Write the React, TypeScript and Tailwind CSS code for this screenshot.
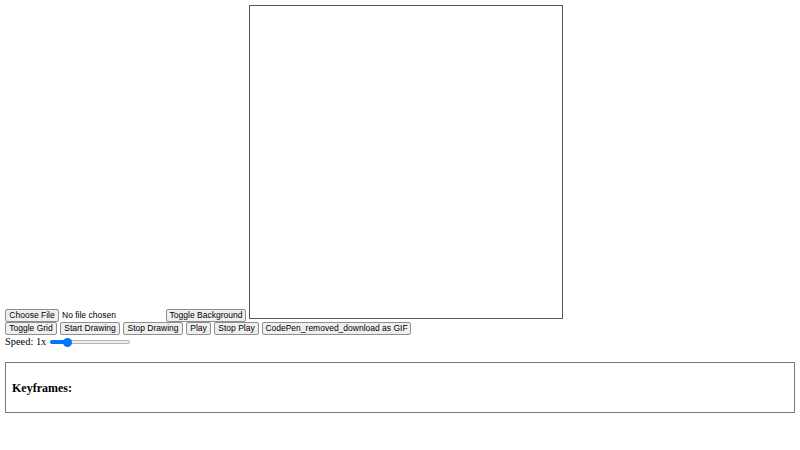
const btn =
  "h-[13px] px-0 flex items-center justify-center bg-[#efefef] border border-[#8f8f8f] rounded-[2px] text-[8.5px] leading-none text-black font-['Liberation_Sans',Arial,sans-serif] whitespace-nowrap shrink-0";

export default function App() {
  return (
    <div className="p-[5px] bg-white text-black font-['Liberation_Serif','Times_New_Roman',serif]">
      {/* top row: file input, background toggle, canvas */}
      <div className="flex items-end">
        <div className="flex items-center w-[158px] shrink-0">
          <button className={`${btn} w-[54px]`}>Choose File</button>
          <span className="ml-[3px] text-[8.5px] leading-none font-['Liberation_Sans',Arial,sans-serif]">
            No file chosen
          </span>
        </div>
        <button className={`${btn} ml-[3px] w-[80px]`}>Toggle Background</button>
        <div className="ml-[3px] mb-[3px] w-[314px] h-[314px] border border-[#555] bg-white shrink-0" />
      </div>

      {/* controls */}
      <div className="flex items-center gap-[3px]">
        <button className={`${btn} w-[52px]`}>Toggle Grid</button>
        <button className={`${btn} w-[60px]`}>Start Drawing</button>
        <button className={`${btn} w-[60px]`}>Stop Drawing</button>
        <button className={`${btn} w-[25px]`}>Play</button>
        <button className={`${btn} w-[45px]`}>Stop Play</button>
        <button className={`${btn} w-[149px]`}>CodePen_removed_download as GIF</button>
      </div>

      {/* speed */}
      <div className="flex items-center h-[14px]">
        <span className="text-[10.4px] leading-none">Speed: 1x</span>
        <div className="relative ml-[4px] w-[80px] h-[10px]">
          <div className="absolute left-0 right-0 top-[3px] h-[4px] rounded-full bg-[#efefef] border border-[#b2b2b2]" />
          <div className="absolute left-0 w-[17px] top-[3px] h-[4px] rounded-full bg-[#0075ff]" />
          <div className="absolute left-[13px] top-[0.5px] w-[9px] h-[9px] rounded-full bg-[#0075ff]" />
        </div>
      </div>

      {/* keyframes */}
      <div className="mt-[13px] h-[51px] border border-[#777] flex items-center px-[6px]">
        <h3 className="text-[12px] font-bold leading-none">Keyframes:</h3>
      </div>
    </div>
  );
}
